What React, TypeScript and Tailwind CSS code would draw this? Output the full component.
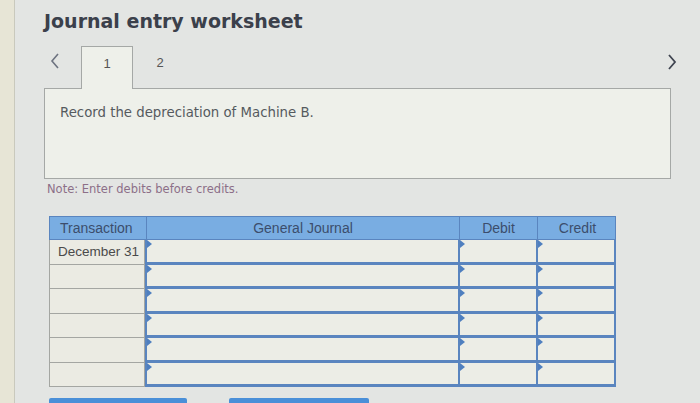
const ROWS = ["December 31", "", "", "", "", ""];

function Marker() {
  return (
    <span className="absolute left-0 top-0 h-0 w-0 border-y-[4px] border-l-[5px] border-y-transparent border-l-[#4f7fbf]" />
  );
}

export default function App() {
  return (
    <div className="flex h-[403px] w-[700px] overflow-hidden bg-[#e3e5e3] font-['DejaVu_Sans',sans-serif]">
      <div className="w-[15px] shrink-0 border-r border-[#c9c9bd] bg-[#e7e5d6]" />
      <div className="flex flex-1 flex-col pl-[29px] pr-[18px] [&>*]:shrink-0">
        <h1 className="mt-[9px] text-[19px] font-bold leading-[24px] text-[#3b404b]">
          Journal entry worksheet
        </h1>

        <div className="mt-[13px] flex items-end">
          <div className="flex h-[42px] w-[37px] items-center justify-start pb-[12px] pl-[6px] text-[#6d7380]">
            <svg width="10" height="16" viewBox="0 0 10 16" fill="none" stroke="currentColor" strokeWidth="1.6">
              <path d="M8 1 L2 8 L8 15" />
            </svg>
          </div>
          <div className="relative z-10 -mb-px flex h-[43px] w-[52px] justify-center border border-b-0 border-[#a5a8a6] bg-[#eef0ea] pt-[7px] font-['Liberation_Sans',sans-serif] text-[13px] text-[#555]">
            1
          </div>
          <div className="flex h-[42px] w-[54px] justify-center pt-[7px] font-['Liberation_Sans',sans-serif] text-[13px] text-[#555]">
            2
          </div>
          <div className="flex-1" />
          <div className="flex h-[42px] w-[20px] items-center justify-center pb-[10px] text-[#3f4450]">
            <svg width="10" height="16" viewBox="0 0 10 16" fill="none" stroke="currentColor" strokeWidth="1.8">
              <path d="M2 1 L8 8 L2 15" />
            </svg>
          </div>
        </div>

        <div className="mr-[11px] h-[91px] border border-[#a5a8a6] bg-[#eef0ea] px-[15px] pt-[14px] text-[13.3px] text-[#555a5e]">
          Record the depreciation of Machine B.
        </div>

        <p className="ml-[3px] mt-[3px] text-[11.5px] leading-[15px] text-[#8c6f88]">
          Note: Enter debits before credits.
        </p>

        <div className="ml-[5px] mt-[19px] w-[567px] font-['Liberation_Sans',sans-serif] text-[13.5px]">
          <div className="grid h-[24px] grid-cols-[96px_313px_78px_80px] border border-[#5a85bf] bg-[#79ade2] text-[14px] text-[#3c4d6c]">
            <div className="flex items-center pl-[10px]">Transaction</div>
            <div className="flex items-center justify-center border-l border-[#5a85bf]">General Journal</div>
            <div className="flex items-center justify-center border-l border-[#5a85bf]">Debit</div>
            <div className="flex items-center justify-center border-l border-[#5a85bf]">Credit</div>
          </div>
          {ROWS.map((label, i) => (
            <div key={i} className="grid h-[24.5px] grid-cols-[96px_313px_78px_80px]">
              <div className="flex items-center border-x border-b border-[#a4a6a2] bg-[#ebebe3] pl-[8px] text-[#4a4a4a]">
                {label}
              </div>
              <div className="relative border-b-[3px] border-l-2 border-[#5a85bf] bg-[#ecede6]">
                <Marker />
              </div>
              <div className="relative border-b-[3px] border-l-2 border-[#5a85bf] bg-[#ecede6]">
                <Marker />
              </div>
              <div className="relative border-x-2 border-b-[3px] border-[#5a85bf] bg-[#ecede6]">
                <Marker />
              </div>
            </div>
          ))}
        </div>

        <div className="ml-[5px] mt-[11px] flex gap-[42px]">
          <div className="h-[8px] w-[138px] rounded-t-[2px] bg-[#4a8fd8]" />
          <div className="h-[8px] w-[140px] rounded-t-[2px] bg-[#4a8fd8]" />
        </div>
      </div>
    </div>
  );
}
